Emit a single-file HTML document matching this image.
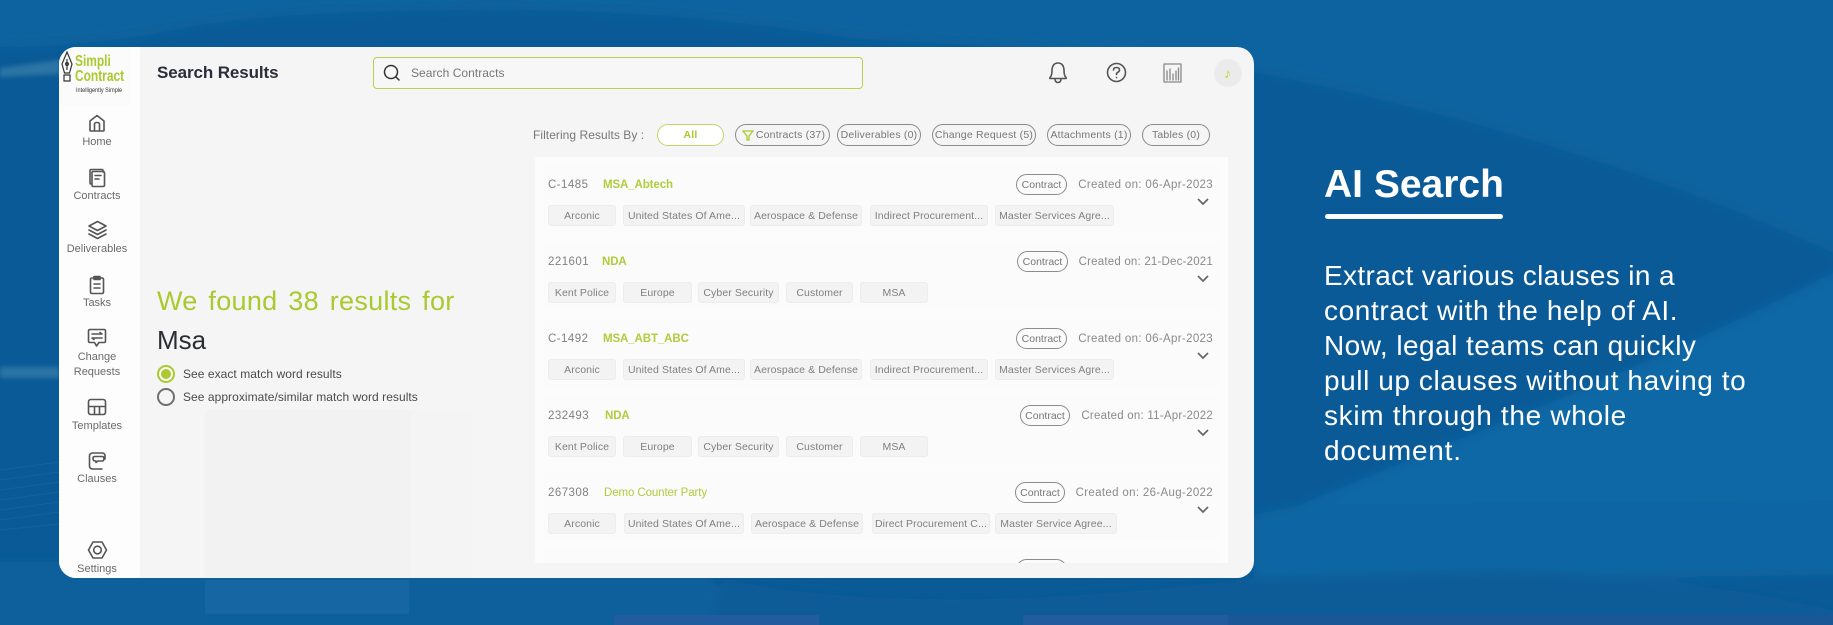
<!DOCTYPE html>
<html><head><meta charset="utf-8"><style>
*{box-sizing:border-box}
html,body{margin:0;padding:0;width:1833px;height:625px;overflow:hidden;background:#0b5a96;font-family:"Liberation Sans",sans-serif}
.a{position:absolute;white-space:nowrap}
#bg{position:absolute;left:0;top:0}
#win{position:absolute;left:59px;top:47px;width:1195px;height:531px;background:#f5f5f6;border-radius:17px;overflow:hidden}
.abs{position:absolute;white-space:nowrap}
.lab{position:absolute;left:0;width:76px;text-align:center;font-size:11px;line-height:14px;color:#6a6a6a}
.ic{position:absolute;fill:none;stroke:#555;stroke-width:1.6;stroke-linecap:round;stroke-linejoin:round}
.pill{position:absolute;top:77px;height:22px;border:1px solid #8a8a8a;border-radius:11px;font-size:10.5px;line-height:20px;text-align:center;color:#777;white-space:nowrap;letter-spacing:.2px}
.row{position:absolute;left:484px;width:677px;height:67px;background:#fbfbfb;border-radius:3px}
.id{position:absolute;left:5px;top:13px;font-size:11.5px;line-height:14px;color:#808080;white-space:nowrap;letter-spacing:.45px}
.nm{position:absolute;top:13px;font-size:11.5px;line-height:14px;color:#b0cb3c;white-space:nowrap;font-weight:bold;letter-spacing:-.1px}
.t{position:absolute;top:40px;height:21px;background:#f3f3f3;border:1px solid #ededed;border-radius:3px;font-size:10.5px;line-height:20px;color:#808080;text-align:center;white-space:nowrap;overflow:hidden;letter-spacing:.1px}
.c{position:absolute;top:9px;height:21px;border:1px solid #8c8c8c;border-radius:11px;font-size:10.5px;line-height:20px;color:#777;text-align:center}
.d{position:absolute;right:7px;top:13px;font-size:11.5px;line-height:14px;color:#8a8a8a;white-space:nowrap;letter-spacing:.33px}
.ch{position:absolute;left:654px;top:33px;fill:none;stroke:#666;stroke-width:1.7}
.p{position:absolute;left:1324px;font-size:28px;line-height:35px;color:#fff;white-space:nowrap}
</style></head><body>
<svg id="bg" width="1833" height="625" viewBox="0 0 1833 625">
<defs>
<filter id="b" x="-5%" y="-5%" width="110%" height="110%"><feGaussianBlur stdDeviation="5"/></filter>
<filter id="b2" x="-5%" y="-5%" width="110%" height="110%"><feGaussianBlur stdDeviation="2"/></filter>
</defs>
<rect width="1833" height="625" fill="#0a5a97"/>
<g filter="url(#b)">
<path d="M-20 -20H1853V262C1700 190 1500 120 1254 72 1150 55 1000 47 850 38 700 15 600 10 500 10 350 10 230 15 150 35 100 42 60 47 0 47H-20Z" fill="#10649f"/>
<path d="M1300 505C1450 440 1650 370 1853 262V560H1300Z" fill="#0a67a5"/>
<path d="M1254 515 1300 505 1853 500V575L1254 580Z" fill="#0e66a3"/>
<path d="M-20 562H700L760 650H-20Z" fill="#0e609c"/>
<path d="M725 578C800 600 1000 612 1254 578L1500 572C1650 575 1750 590 1853 615V650H700Z" fill="#0a5b97"/>
</g>
<g filter="url(#b2)">
<path d="M0 68 60 60V74L0 77Z" fill="#2a74a5"/>
<path d="M0 367H59V378H0Z" fill="#2a74a5"/>
</g>
<g stroke="#146499" stroke-width="1" fill="none">
<path d="M0 470 59 462M0 480 59 472M0 490 59 482M0 500 59 492M0 510 59 502M0 520 59 512M0 530 59 524"/>
</g>
<rect x="205" y="580" width="204" height="34" fill="#1566a2"/>
<rect x="614" y="615" width="205" height="10" fill="#215c9e"/>
<rect x="1023" y="615" width="205" height="10" fill="#215c9e"/>
<rect x="1228" y="615" width="605" height="10" fill="#1a5796"/>
</svg>

<div id="win">
<div class="abs" style="left:146px;top:363px;width:206px;height:168px;background:#f2f2f2"></div>
<div class="abs" style="left:352px;top:363px;width:60px;height:168px;background:#f4f4f4"></div>
<div class="abs" style="left:0;top:0;width:81px;height:531px;background:#fdfdfd"></div>
<div class="abs" style="left:0;top:0;width:72px;height:58px;background:#fbfbfb"></div>
<!-- logo -->
<svg class="abs" style="left:0;top:4px" width="16" height="34" viewBox="0 0 16 34" fill="none" stroke="#333" stroke-width="1.2"><path d="M8 1 13 13 10.500 22H5.500L3 13ZM8 8V19M5 24H11V30H5Z"/><circle cx="8" cy="13" r="1.400"/></svg>
<div class="abs" style="left:16px;top:7px;font-size:15.5px;line-height:15px;font-weight:bold;color:#a9c92f;transform:scaleX(.77);transform-origin:0 0">Simpli<br>Contract</div>
<div class="abs" style="left:17px;top:40px;font-size:6.5px;line-height:8px;color:#333;transform:scaleX(.85);transform-origin:0 0">Intelligently Simple</div>

<!-- sidebar -->
<svg class="ic" style="left:28px;top:67px" width="20" height="18" viewBox="0 0 20 18"><path d="M3 16.500V7L10 1.500 17 7V16.500Q17 17 16 17H4Q3 17 3 16.500ZM7.500 17V10Q7.500 8.500 10 8.500 12.500 8.500 12.500 10V17"/></svg>
<div class="lab" style="top:88px">Home</div>
<svg class="ic" style="left:28px;top:121px" width="20" height="20" viewBox="0 0 20 20"><path d="M16 4V2.500Q16 1.500 15 1.500H4Q3 1.500 3 2.500V15Q3 16 4 16H5M5 4.500Q5 3.500 6 3.500H16Q17.500 3.500 17.500 5V17Q17.500 18.500 16 18.500H6Q5 18.500 5 17ZM8 7.500H14M8 11H12"/></svg>
<div class="lab" style="top:142px">Contracts</div>
<svg class="ic" style="left:28px;top:173px" width="21" height="20" viewBox="0 0 21 20"><path d="M10.500 1.500 19 6 10.500 10.500 2 6ZM2 10 10.500 14.500 19 10M2 14 10.500 18.500 19 14"/></svg>
<div class="lab" style="top:195px">Deliverables</div>
<svg class="ic" style="left:28px;top:228px" width="20" height="20" viewBox="0 0 20 20"><path d="M5 3H15Q16.500 3 16.500 4.500V17Q16.500 18.500 15 18.500H5Q3.500 18.500 3.500 17V4.500Q3.500 3 5 3ZM7 1.500H13V4.500H7ZM7 9H13M7 13H13"/></svg>
<div class="lab" style="top:249px">Tasks</div>
<svg class="ic" style="left:28px;top:281px" width="20" height="20" viewBox="0 0 20 20"><path d="M3 1.500H17Q18.500 1.500 18.500 3V13Q18.500 14.500 17 14.500H12L9.500 18 7.500 14.500H3Q1.500 14.500 1.500 13V3Q1.500 1.500 3 1.500ZM5 6H15L13 4.500M15 10H5L7 11.500"/></svg>
<div class="lab" style="top:303px">Change</div>
<div class="lab" style="top:318px">Requests</div>
<svg class="ic" style="left:28px;top:351px" width="20" height="18" viewBox="0 0 20 18"><path d="M4 1.500H16Q18.500 1.500 18.500 4V14Q18.500 16.500 16 16.500H4Q1.500 16.500 1.500 14V4Q1.500 1.500 4 1.500ZM1.500 8.500H18.500M7.500 8.500V16.500M12.500 8.500V16.500"/></svg>
<div class="lab" style="top:372px">Templates</div>
<svg class="ic" style="left:28px;top:404px" width="20" height="20" viewBox="0 0 20 20"><path d="M15 18H6Q2.500 18 2.500 15V5Q2.500 2 6 2H15Q18 2 18 5V8M6 7Q6 5.500 8 5.500H15Q17 5.500 17 7.500 17 10 15 10H11L9 11.500V10H8Q6 10 6 7Z"/></svg>
<div class="lab" style="top:425px">Clauses</div>
<svg class="ic" style="left:28px;top:493px" width="21" height="20" viewBox="0 0 21 20"><path d="M6 2H15L19.500 10 15 18H6L1.500 10Z"/><circle cx="10.500" cy="10" r="3.800"/></svg>
<div class="lab" style="top:515px">Settings</div>

<!-- top bar -->
<div class="abs" style="left:98px;top:16px;font-size:17px;line-height:20px;font-weight:bold;color:#2b2d3a;letter-spacing:-.1px">Search Results</div>
<div class="abs" style="left:314px;top:10px;width:490px;height:32px;border:1px solid #b9d04f;border-radius:4px;background:#f7f7f7"></div>
<svg class="abs" style="left:323px;top:16px" width="20" height="20" viewBox="0 0 20 20" fill="none" stroke="#333" stroke-width="1.500" stroke-linecap="round"><circle cx="9" cy="9" r="6.500"/><path d="M14 14 17 17"/></svg>
<div class="abs" style="left:352px;top:19px;font-size:12px;line-height:14px;color:#777;letter-spacing:.05px">Search Contracts</div>
<svg class="ic" style="left:988px;top:14px" width="22" height="24" viewBox="0 0 22 24"><path d="M3 17.500H19Q19.500 17.500 19 16.500 17 15 17 9 16.500 2 11 2 5.500 2 5 9 5 15 3 16.500 2.500 17.500 3 17.500ZM8 17.500Q8 21.500 11 21.500 14 21.500 14 17.500"/></svg>
<svg class="ic" style="left:1047px;top:14px" width="21" height="23" viewBox="0 0 21 23"><circle cx="10.500" cy="11.500" r="9"/><path d="M7.500 9Q7.500 6.500 10.500 6.500 13.500 6.500 13.500 9 13.500 10.500 11.500 11.500 10.500 12 10.500 13.500M10.500 16.500V16.600"/></svg>
<svg class="ic" style="left:1104px;top:16px;stroke:#888" width="19" height="20" viewBox="0 0 19 20"><path d="M1 1H18V19H1ZM4 17V8M7 17V6M10 17V11M13 17V8M15.500 17V5" stroke-width="1.300"/></svg>
<div class="abs" style="left:1155px;top:12px;width:28px;height:28px;border-radius:50%;background:#ebebeb"></div>
<div class="abs" style="left:1165px;top:16px;font-size:14px;line-height:20px;color:#c9d23a;font-weight:bold">♪</div>

<!-- left column -->
<div class="abs" style="left:98px;top:239px;font-size:27px;line-height:30px;color:#a9c92f;word-spacing:3px;letter-spacing:.3px">We found 38 results for</div>
<div class="abs" style="left:98px;top:278px;font-size:26px;line-height:30px;color:#2b2d33">Msa</div>
<div class="abs" style="left:98px;top:318px;width:18px;height:18px;border-radius:50%;border:2px solid #a9c92f;background:#f7f7f7"></div>
<div class="abs" style="left:102px;top:322px;width:10px;height:10px;border-radius:50%;background:#a9c92f"></div>
<div class="abs" style="left:98px;top:341px;width:18px;height:18px;border-radius:50%;border:2px solid #6f6f6f"></div>
<div class="abs" style="left:124px;top:320px;font-size:12px;line-height:14px;color:#4a4a4a;letter-spacing:.05px">See exact match word results</div>
<div class="abs" style="left:124px;top:343px;font-size:12px;line-height:14px;color:#4a4a4a;letter-spacing:.05px">See approximate/similar match word results</div>

<!-- filter bar -->
<div class="abs" style="left:474px;top:81px;font-size:12px;line-height:14px;color:#777;letter-spacing:.05px">Filtering Results By :</div>
<div class="pill" style="left:598px;width:67px;border-color:#c3d565;background:#fff;color:#a9c92f;font-weight:bold">All</div>
<div class="pill" style="left:676px;width:95px;padding-left:16px"><svg style="position:absolute;left:6px;top:5px" width="12" height="11" viewBox="0 0 12 11" fill="none" stroke="#a9c92f" stroke-width="1.300"><path d="M1 1H11L7 6V10H5V6Z"/></svg>Contracts (37)</div>
<div class="pill" style="left:778px;width:84px">Deliverables (0)</div>
<div class="pill" style="left:873px;width:104px">Change Request (5)</div>
<div class="pill" style="left:988px;width:84px">Attachments (1)</div>
<div class="pill" style="left:1083px;width:68px">Tables (0)</div>

<!-- results -->
<div class="abs" style="left:476px;top:110px;width:693px;height:406px;background:#fcfcfc;border-radius:2px"></div>

<div class="row" style="top:118px"><div class="id">C-1485</div><div class="nm" style="left:60px">MSA_Abtech</div><div class="c" style="left:473px;width:51px">Contract</div><div class="d">Created on: 06-Apr-2023</div><svg class="ch" width="12" height="8" viewBox="0 0 12 8"><path d="M1 1 6 6 11 1"/></svg>
<div class="t" style="left:5px;width:68px">Arconic</div><div class="t" style="left:80px;width:122px">United States Of Ame...</div><div class="t" style="left:207px;width:112px">Aerospace &amp; Defense</div><div class="t" style="left:327px;width:118px">Indirect Procurement...</div><div class="t" style="left:452px;width:119px">Master Services Agre...</div></div>

<div class="row" style="top:195px"><div class="id">221601</div><div class="nm" style="left:59px">NDA</div><div class="c" style="left:474px;width:51px">Contract</div><div class="d" style="letter-spacing:.2px">Created on: 21-Dec-2021</div><svg class="ch" width="12" height="8" viewBox="0 0 12 8"><path d="M1 1 6 6 11 1"/></svg>
<div class="t" style="left:5px;width:68px">Kent Police</div><div class="t" style="left:80px;width:69px">Europe</div><div class="t" style="left:155px;width:81px">Cyber Security</div><div class="t" style="left:243px;width:67px">Customer</div><div class="t" style="left:317px;width:68px">MSA</div></div>

<div class="row" style="top:272px"><div class="id">C-1492</div><div class="nm" style="left:60px">MSA_ABT_ABC</div><div class="c" style="left:473px;width:51px">Contract</div><div class="d">Created on: 06-Apr-2023</div><svg class="ch" width="12" height="8" viewBox="0 0 12 8"><path d="M1 1 6 6 11 1"/></svg>
<div class="t" style="left:5px;width:68px">Arconic</div><div class="t" style="left:80px;width:122px">United States Of Ame...</div><div class="t" style="left:207px;width:112px">Aerospace &amp; Defense</div><div class="t" style="left:327px;width:118px">Indirect Procurement...</div><div class="t" style="left:452px;width:119px">Master Services Agre...</div></div>

<div class="row" style="top:349px"><div class="id">232493</div><div class="nm" style="left:62px">NDA</div><div class="c" style="left:477px;width:50px">Contract</div><div class="d" style="letter-spacing:.23px">Created on: 11-Apr-2022</div><svg class="ch" width="12" height="8" viewBox="0 0 12 8"><path d="M1 1 6 6 11 1"/></svg>
<div class="t" style="left:5px;width:68px">Kent Police</div><div class="t" style="left:80px;width:69px">Europe</div><div class="t" style="left:155px;width:81px">Cyber Security</div><div class="t" style="left:243px;width:67px">Customer</div><div class="t" style="left:317px;width:68px">MSA</div></div>

<div class="row" style="top:426px"><div class="id">267308</div><div class="nm" style="left:61px;font-weight:normal">Demo Counter Party</div><div class="c" style="left:472px;width:50px">Contract</div><div class="d">Created on: 26-Aug-2022</div><svg class="ch" width="12" height="8" viewBox="0 0 12 8"><path d="M1 1 6 6 11 1"/></svg>
<div class="t" style="left:5px;width:68px">Arconic</div><div class="t" style="left:81px;width:120px">United States Of Ame...</div><div class="t" style="left:208px;width:112px">Aerospace &amp; Defense</div><div class="t" style="left:329px;width:118px">Direct Procurement C...</div><div class="t" style="left:452px;width:122px">Master Service Agree...</div></div>

<div class="row" style="top:503px;height:13px;overflow:hidden"><div class="c" style="left:473px;width:51px">Contract</div></div>
</div>

<div class="a" style="left:1324px;top:160px;font-size:39px;line-height:50px;font-weight:bold;color:#fff">AI Search</div>
<div class="a" style="left:1325px;top:214px;width:178px;height:5px;background:#fff;border-radius:3px"></div>
<div class="p" style="top:258px;letter-spacing:.36px">Extract various clauses in a</div>
<div class="p" style="top:293px;letter-spacing:.62px">contract with the help of AI.</div>
<div class="p" style="top:328px;letter-spacing:.46px">Now, legal teams can quickly</div>
<div class="p" style="top:363px;letter-spacing:.58px">pull up clauses without having to</div>
<div class="p" style="top:398px;letter-spacing:.68px">skim through the whole</div>
<div class="p" style="top:433px;letter-spacing:.78px">document.</div>
</body></html>
